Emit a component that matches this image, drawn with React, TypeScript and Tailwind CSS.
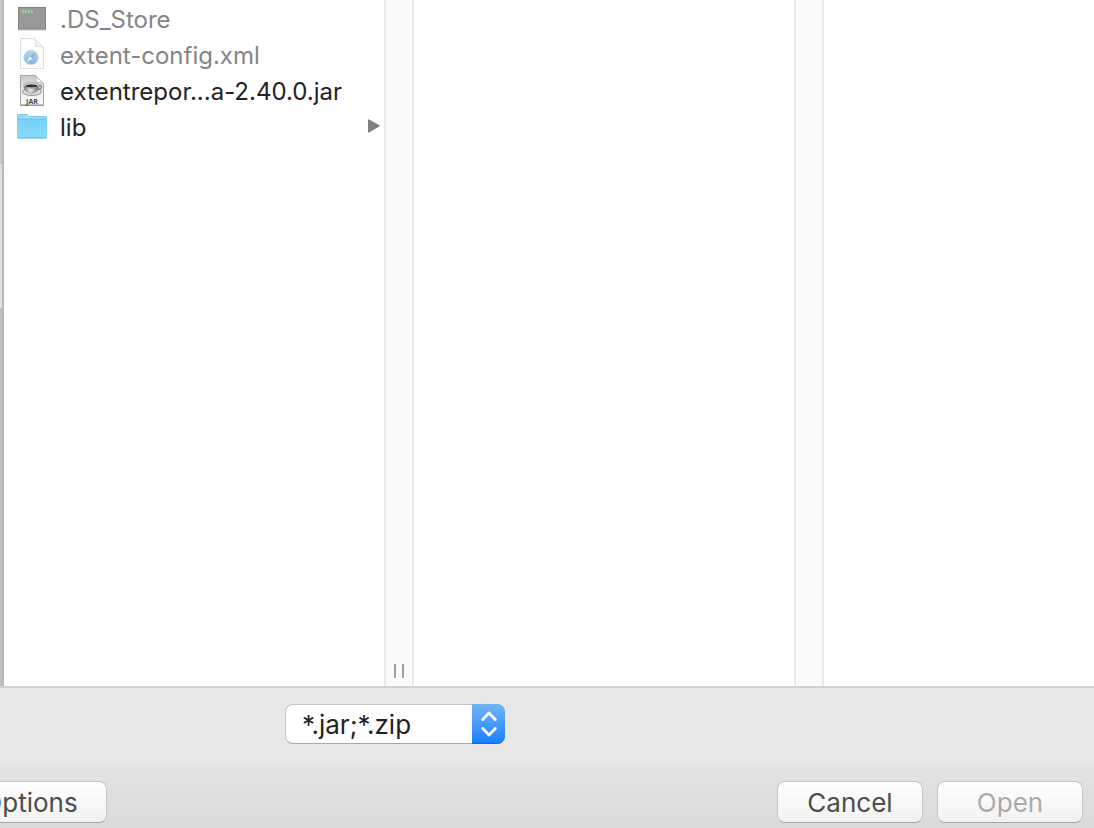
import React from "react";

function ExecIcon() {
  return (
    <svg viewBox="0 0 32 36" className="h-9 w-8" aria-hidden="true">
      <rect x="2" y="9" width="28" height="22" rx="1" fill="#000" opacity="0.12" />
      <rect x="2.5" y="7.5" width="27" height="21.5" fill="#999" stroke="#808080" />
      <path d="M6 11.500h11" stroke="#9fd8a6" strokeWidth="3" strokeDasharray="2.200 0.700" opacity="0.8" />
    </svg>
  );
}

function XmlIcon() {
  return (
    <svg viewBox="0 0 32 36" className="h-9 w-8" aria-hidden="true">
      <defs>
        <linearGradient id="compass" x1="0" y1="0" x2="0" y2="1">
          <stop offset="0" stopColor="#a9dcf7" />
          <stop offset="1" stopColor="#7cb2ea" />
        </linearGradient>
      </defs>
      <path d="M4.500 2.500h14l9 9v21h-23z" fill="#fdfdfd" stroke="#dedede" />
      <path d="M18.500 2.500c1 2 1.300 4.500.8 8c4-.3 6.500 0 8.200 1z" fill="#f4f4f4" stroke="#dcdcdc" strokeWidth="0.8" />
      <circle cx="15" cy="21.500" r="7.200" fill="url(#compass)" stroke="#c4d3de" strokeWidth="0.8" />
      <path d="M19.500 17l-3.400 5.500-2-2z" fill="#ee8278" />
      <path d="M10.500 26l3.600-5.500 2 2z" fill="#fff" />
    </svg>
  );
}

function JarIcon() {
  return (
    <svg viewBox="0 0 32 36" className="h-9 w-8" aria-hidden="true">
      <defs>
        <linearGradient id="sheet" x1="0" y1="0" x2="0" y2="1">
          <stop offset="0" stopColor="#c9c9c9" />
          <stop offset="0.6" stopColor="#ededed" />
          <stop offset="1" stopColor="#fff" />
        </linearGradient>
        <linearGradient id="cup" x1="0" y1="0" x2="1" y2="0">
          <stop offset="0" stopColor="#777" />
          <stop offset="0.4" stopColor="#e8e8e8" />
          <stop offset="1" stopColor="#6b6b6b" />
        </linearGradient>
      </defs>
      <path d="M4.500 3.500h15l8 8v21.500h-23z" fill="url(#sheet)" stroke="#a5a5a5" />
      <path d="M4 33.300h24" stroke="#8d8d8d" />
      <path d="M19 3.500c1.500 2 1.500 4 .8 7c4-.5 6 0 7.700 1z" fill="#fafafa" stroke="#aaa" strokeWidth="0.7" />
      <ellipse cx="16" cy="19.800" rx="9.500" ry="3.600" fill="#dcdcdc" stroke="#777" strokeWidth="0.8" />
      <path d="M22 13.500c4.500-1 5 3.500-1 4" fill="none" stroke="#777" strokeWidth="1.200" />
      <path d="M8 13.500c0 5 3.500 7.500 7.500 7.500s7.500-2.500 7.500-7.500z" fill="url(#cup)" stroke="#777" strokeWidth="0.5" />
      <ellipse cx="15.500" cy="13.500" rx="7.500" ry="2.600" fill="#f0f0f0" stroke="#777" strokeWidth="0.6" />
      <ellipse cx="15.500" cy="13.900" rx="6.200" ry="1.700" fill="#46331f" />
      <text x="16" y="31.500" textAnchor="middle" fontSize="7" fontWeight="700" fill="#444" fontFamily="Open Sans, sans-serif">JAR</text>
    </svg>
  );
}

function FolderIcon() {
  return (
    <svg viewBox="0 0 32 36" className="h-9 w-8" aria-hidden="true">
      <defs>
        <linearGradient id="folder" x1="0" y1="0" x2="0" y2="1">
          <stop offset="0" stopColor="#74d1f8" />
          <stop offset="1" stopColor="#8cdbfa" />
        </linearGradient>
      </defs>
      <path d="M1 8c0-1.200.6-2 1.800-2h7.400c1.500 0 2 2 3.800 2h15.400c1 0 1.600.7 1.600 1.700V28H1z" fill="#68bfe6" />
      <path d="M1.500 8c0-.8.500-1.500 1.500-1.500h7c1.500 0 2 2 3.800 2h15.200c1 0 1.500.5 1.500 1.500v1h-29z" fill="#98dcf9" />
      <path d="M1 11h30v17.500c0 1.200-.6 1.800-1.800 1.800H2.800C1.600 30.300 1 29.700 1 28.500z" fill="url(#folder)" />
      <path d="M1 11h30" stroke="#64bde5" strokeWidth="0.6" />
      <path d="M1.500 30h29" stroke="#58afd9" />
    </svg>
  );
}

const files = [
  { name: ".DS_Store", Icon: ExecIcon, dimmed: true },
  { name: "extent-config.xml", Icon: XmlIcon, dimmed: true },
  { name: "extentrepor...a-2.40.0.jar", Icon: JarIcon },
  { name: "lib", Icon: FolderIcon, folder: true },
];

function Gutter({ handle }: { handle?: boolean }) {
  return (
    <div className="flex w-[30px] shrink-0 items-end justify-center gap-1.5 border-x-2 border-[#e8e8e8] bg-[#fafafa] pb-2">
      {handle && (
        <>
          <span className="h-3.5 w-0.5 bg-[#a0a0a0]" />
          <span className="h-3.5 w-0.5 bg-[#a0a0a0]" />
        </>
      )}
    </div>
  );
}

const buttonClass =
  "h-[42px] w-[146px] shrink-0 rounded-lg border border-[#c6c6c6] border-b-[#a8a8a8] bg-linear-to-b from-white to-[#f1f1f1] pt-0.5 text-[26px] leading-8";

export default function App() {
  return (
    <div className="flex min-h-screen flex-col overflow-hidden bg-white font-['Inter',sans-serif] text-[#222]">
      <main className="flex flex-1">
        {/* edge of the window behind the sheet */}
        <div className="flex w-1 shrink-0 flex-col border-r-2 border-[#b9b9b9]">
          <div className="h-[164px] bg-[#c6c6c6]" />
          <div className="h-2 bg-[#e6d8d5]" />
          <div className="h-[136px] bg-[#e1e1e1]" />
          <div className="flex-1 bg-[#bfbfbf]" />
        </div>

        <ul className="w-[380px] shrink-0">
          {files.map(({ name, Icon, dimmed, folder }) => (
            <li key={name} className="flex h-9 items-center pr-1 pl-3">
              <Icon />
              <span
                className={`ml-3 flex-1 pt-1 text-2xl whitespace-nowrap ${dimmed ? "text-[#858585]" : "text-[#222]"}`}
              >
                {name}
              </span>
              {folder && (
                <svg viewBox="0 0 13 14" className="h-3.5 w-[13px]" aria-hidden="true">
                  <path d="M1 1.200q0-1.200 1.200-.7l10 5.700q1 .7 0 1.400L2.200 13.400q-1.200.5-1.200-.7z" fill="#808080" />
                </svg>
              )}
            </li>
          ))}
        </ul>
        <Gutter handle />
        <div className="w-[380px] shrink-0" />
        <Gutter />
        <div className="flex-1" />
      </main>

      <section className="flex h-[78px] items-start border-t-2 border-[#d0d0d0] bg-[#e8e8e8] pt-4 pl-[285px]">
        <div className="relative h-10 w-[220px]">
          <select
            aria-label="File type"
            className="h-10 w-full appearance-none rounded-lg border border-[#c2c2c2] border-b-[#a8a8a8] bg-white pt-0.5 pr-9 pl-4 text-[26px] leading-8 text-[#222]"
          >
            <option>*.jar;*.zip</option>
          </select>
          <span className="pointer-events-none absolute inset-y-0 right-0 flex w-[33px] items-center justify-center rounded-r-lg border-b border-[#1268dc] bg-linear-to-b from-[#6fb5f9] to-[#157efb]">
            <svg viewBox="0 0 16 26" className="h-[26px] w-4" fill="none" stroke="#fff" strokeWidth="2.800" strokeLinecap="round" strokeLinejoin="round" aria-hidden="true">
              <path d="M1.700 8.500L8 2l6.300 6.500M1.700 17.500L8 24l6.300-6.500" />
            </svg>
          </span>
        </div>
      </section>

      <footer className="flex h-16 items-center gap-3.5 bg-linear-to-b from-[#e4e4e4] to-[#d9d9d9] pt-3 pr-[11px]">
        <button type="button" className={`${buttonClass} -ml-[39px] pr-2 text-[#4d4d4d]`}>
          Options
        </button>
        <div className="flex-1" />
        <button type="button" className={`${buttonClass} text-[#4d4d4d]`}>
          Cancel
        </button>
        <button type="button" disabled className={`${buttonClass} text-[#aaa]`}>
          Open
        </button>
      </footer>
    </div>
  );
}
